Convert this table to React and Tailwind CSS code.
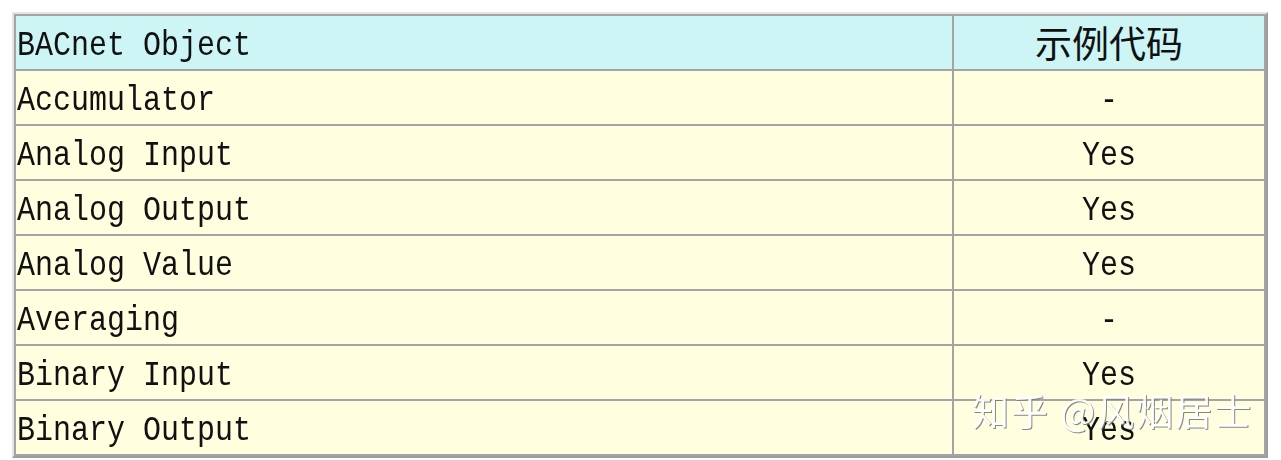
const ROWS = [
  ["Accumulator", "-"],
  ["Analog Input", "Yes"],
  ["Analog Output", "Yes"],
  ["Analog Value", "Yes"],
  ["Averaging", "-"],
  ["Binary Input", "Yes"],
  ["Binary Output", "Yes"],
];

const mono = "font-['Liberation_Mono','DejaVu_Sans_Mono',monospace] text-[30px] text-[#111]";

function Txt({ children }) {
  return <span className="inline-block scale-y-115 leading-none">{children}</span>;
}

export default function App() {
  return (
    <div className="min-h-screen bg-white pl-[12px] pt-[12px]">
      <div className="relative w-[1256px] border-2 border-t-[#e4e4e4] border-l-[#e4e4e4] border-r-[#9c9c9c] border-b-[#9c9c9c]">
        <div className="grid grid-cols-[936px_1fr] gap-[2px] bg-[#a4a4a4] p-[2px]">
          <div className={`flex h-[53px] items-center bg-[#cdf5f5] pl-[1px] pt-[6px] ${mono}`}>
            <Txt>BACnet Object</Txt>
          </div>
          <div className="flex h-[53px] items-center justify-center bg-[#cdf5f5] font-['Noto_Sans_CJK_SC',sans-serif] text-[37px] text-[#111]">
            示例代码
          </div>
          {ROWS.map(([name, val]) => (
            <>
              <div key={name} className={`flex h-[53px] items-center bg-[#ffffe0] pl-[1px] pt-[6px] ${mono}`}>
                <Txt>{name}</Txt>
              </div>
              <div key={name + "v"} className={`flex h-[53px] items-center justify-center bg-[#ffffe0] pt-[6px] ${mono}`}>
                <Txt>{val}</Txt>
              </div>
            </>
          ))}
        </div>

        {/* watermark */}
        <div className="pointer-events-none absolute left-[958px] top-[378px] font-['Noto_Sans_CJK_SC',sans-serif] text-[37px] leading-none tracking-[2px] text-white opacity-90 drop-shadow-[1px_1px_0_#7a7a7a]">
          知乎 @风烟居士
        </div>
      </div>
    </div>
  );
}
